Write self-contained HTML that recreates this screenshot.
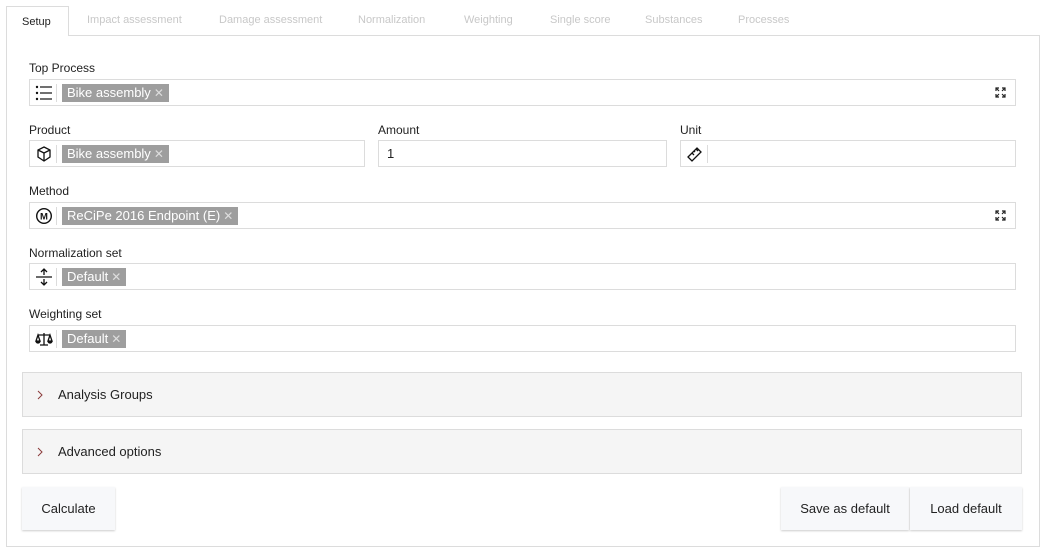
<!DOCTYPE html>
<html><head><meta charset="utf-8"><style>
*{box-sizing:border-box;margin:0;padding:0}
body{width:1048px;height:555px;background:#fff;font-family:"Liberation Sans",sans-serif;font-size:12px;color:#222;position:relative;overflow:hidden}
.tab{position:absolute;top:14px;font-size:11px;color:#c8c8c8}
.panel{position:absolute;left:6px;top:35px;width:1034px;height:512px;border:1px solid #dcdcdc}
.setup{position:absolute;left:6px;top:6px;width:63px;height:30px;border:1px solid #dcdcdc;border-bottom:none;background:#fff;z-index:2;font-size:11px;color:#222;padding:9px 0 0 15px}
.lbl{position:absolute;font-size:12px;color:#222}
.box{position:absolute;border:1px solid #dcdcdc;height:27px;background:#fff}
.ic{position:absolute;left:0;top:4px;width:27px;height:18px;border-right:1px solid #dcdcdc}
.ic svg{position:absolute;left:5px;top:0}
.tag{position:absolute;left:32px;top:4px;height:18px;background:#9e9e9e;color:#fff;font-size:13px;line-height:18px;padding:0 5px}
.tag span{color:#ddd;font-size:12px;margin-left:3px}
.exp{position:absolute;right:9px;top:7px}
.acc{position:absolute;left:22px;width:1000px;height:45px;background:#f5f5f5;border:1px solid #dcdcdc;font-size:13px;color:#222;line-height:43px;padding-left:35px}
.acc svg{position:absolute;left:14px;top:17px}
.btn{position:absolute;top:487px;height:43px;background:#f7f8fa;box-shadow:0 1px 2px rgba(0,0,0,.2);font-size:13px;color:#222;text-align:center;line-height:43px}
</style></head><body>
<div class="setup" style="padding-top:9px">Setup</div>
<div class="tab" style="left:87px">Impact assessment</div>
<div class="tab" style="left:219px">Damage assessment</div>
<div class="tab" style="left:358px">Normalization</div>
<div class="tab" style="left:464px">Weighting</div>
<div class="tab" style="left:550px">Single score</div>
<div class="tab" style="left:645px">Substances</div>
<div class="tab" style="left:738px">Processes</div>
<div class="panel"></div>

<div class="lbl" style="left:29px;top:61px">Top Process</div>
<div class="box" style="left:29px;top:79px;width:987px">
<div class="ic"><svg width="18" height="18" viewBox="0 0 18 18"><g fill="#111"><circle cx="2" cy="3" r="1.2"/><circle cx="2" cy="9" r="1.2"/><circle cx="2" cy="15" r="1.2"/><rect x="5" y="2.4" width="12" height="1.2"/><rect x="5" y="8.4" width="12" height="1.2"/><rect x="5" y="14.4" width="12" height="1.2"/></g></svg></div>
<div class="tag">Bike assembly<span>✕</span></div>
<svg class="exp" width="11" height="11" viewBox="0 0 11 11" fill="none" stroke="#222" stroke-width="1.2"><path d="M1 4V1h3M1 1l3 3M7 1h3v3M10 1L7 4M1 7v3h3M1 10l3-3M10 7v3H7M10 10L7 7"/></svg>
</div>

<div class="lbl" style="left:29px;top:123px">Product</div>
<div class="box" style="left:29px;top:140px;width:336px">
<div class="ic"><svg width="18" height="18" viewBox="0 0 18 18" fill="none" stroke="#111" stroke-width="1.3"><path d="M9 2l6 3v7l-6 4-6-4V5zM3 5l6 3 6-3M9 8v8"/></svg></div>
<div class="tag">Bike assembly<span>✕</span></div>
</div>
<div class="lbl" style="left:378px;top:123px">Amount</div>
<div class="box" style="left:378px;top:140px;width:289px;font-size:13px;padding:5px 0 0 8px">1</div>
<div class="lbl" style="left:680px;top:123px">Unit</div>
<div class="box" style="left:680px;top:140px;width:336px">
<div class="ic"><svg width="18" height="18" viewBox="0 0 18 18" fill="none" stroke="#111" stroke-width="1.3"><path d="M2 12l9-9 4 4-9 9zM6 8l2 2M8 6l1 1M10 4l2 2"/></svg></div>
</div>

<div class="lbl" style="left:29px;top:184px">Method</div>
<div class="box" style="left:29px;top:202px;width:987px">
<div class="ic"><svg width="18" height="18" viewBox="0 0 18 18"><circle cx="9" cy="9" r="7.3" fill="none" stroke="#111" stroke-width="1.4"/><text x="9" y="12.5" font-size="9.5" font-weight="bold" text-anchor="middle" font-family="Liberation Sans" fill="#111">M</text></svg></div>
<div class="tag">ReCiPe 2016 Endpoint (E)<span>✕</span></div>
<svg class="exp" width="11" height="11" viewBox="0 0 11 11" fill="none" stroke="#222" stroke-width="1.2"><path d="M1 4V1h3M1 1l3 3M7 1h3v3M10 1L7 4M1 7v3h3M1 10l3-3M10 7v3H7M10 10L7 7"/></svg>
</div>

<div class="lbl" style="left:29px;top:246px">Normalization set</div>
<div class="box" style="left:29px;top:263px;width:987px">
<div class="ic"><svg width="18" height="18" viewBox="0 0 18 18" fill="none" stroke="#111" stroke-width="1.3"><path d="M1 9h16M9 1v6M6 4l3-3 3 3M9 11v6M6 14l3 3 3-3"/></svg></div>
<div class="tag">Default<span>✕</span></div>
</div>

<div class="lbl" style="left:29px;top:307px">Weighting set</div>
<div class="box" style="left:29px;top:325px;width:987px">
<div class="ic"><svg width="18" height="18" viewBox="0 0 18 18" fill="none" stroke="#111" stroke-width="1.3"><path d="M9 3v12M5 15h8M3 5h12M3 5l-2 6h4zM15 5l-2 6h4z"/><path d="M1 11a2 2 0 004 0M13 11a2 2 0 004 0" fill="#111"/></svg></div>
<div class="tag">Default<span>✕</span></div>
</div>

<div class="acc" style="top:372px"><svg width="6" height="10" viewBox="0 0 6 10" fill="none" stroke="#8a3a3a" stroke-width="1"><path d="M1 1l4 4-4 4"/></svg>Analysis Groups</div>
<div class="acc" style="top:429px"><svg width="6" height="10" viewBox="0 0 6 10" fill="none" stroke="#8a3a3a" stroke-width="1"><path d="M1 1l4 4-4 4"/></svg>Advanced options</div>

<div class="btn" style="left:22px;width:93px">Calculate</div>
<div class="btn" style="left:781px;width:128px">Save as default</div>
<div class="btn" style="left:910px;width:112px">Load default</div>
</body></html>
